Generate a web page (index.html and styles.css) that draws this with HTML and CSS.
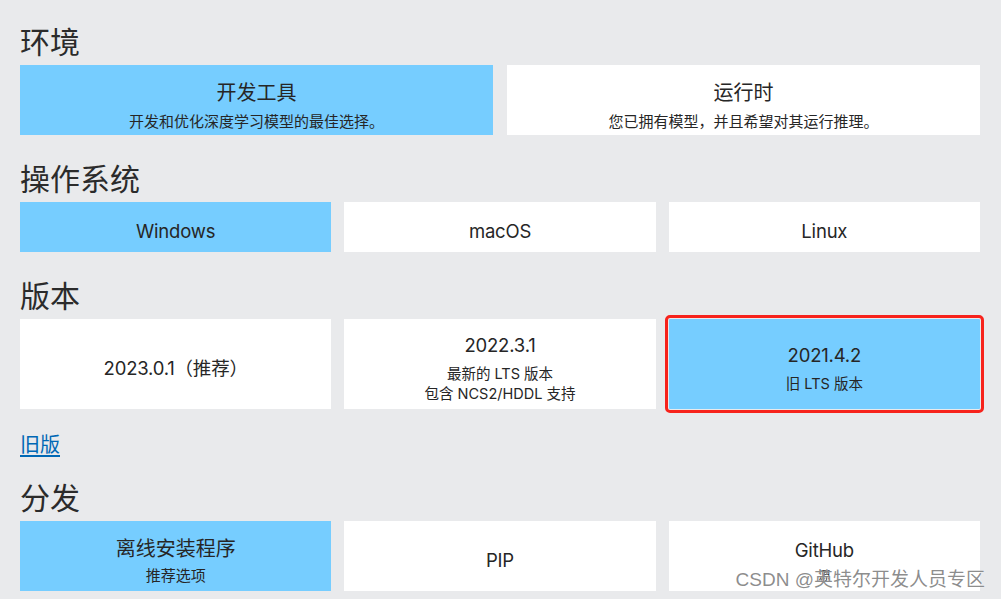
FILE: index.html
```html
<!DOCTYPE html>
<html lang="zh-CN">
<head>
<meta charset="utf-8">
<title>选择</title>
<link rel="stylesheet" href="styles.css">
</head>
<body>
<main class="page">
  <section class="group">
    <h2 class="group-title">环境</h2>
    <div class="row row-2 tall">
      <div class="opt active"><span class="opt-title">开发工具</span><span class="opt-sub">开发和优化深度学习模型的最佳选择。</span></div>
      <div class="opt"><span class="opt-title">运行时</span><span class="opt-sub">您已拥有模型，并且希望对其运行推理。</span></div>
    </div>
  </section>
  <section class="group">
    <h2 class="group-title">操作系统</h2>
    <div class="row row-3 short">
      <div class="opt active"><span class="opt-title latin">Windows</span></div>
      <div class="opt"><span class="opt-title latin">macOS</span></div>
      <div class="opt"><span class="opt-title latin">Linux</span></div>
    </div>
  </section>
  <section class="group versions">
    <h2 class="group-title">版本</h2>
    <div class="row row-3 huge">
      <div class="opt"><span class="opt-title latin">2023.0.1（推荐）</span></div>
      <div class="opt"><span class="opt-title latin">2022.3.1</span><span class="opt-sub small">最新的 LTS 版本<br>包含 NCS2/HDDL 支持</span></div>
      <div class="opt active marked"><span class="opt-title latin">2021.4.2</span><span class="opt-sub small">旧 LTS 版本</span></div>
    </div>
    <a class="old-link" href="#">旧版</a>
  </section>
  <section class="group last">
    <h2 class="group-title">分发</h2>
    <div class="row row-3 tall">
      <div class="opt active"><span class="opt-title">离线安装程序</span><span class="opt-sub small wide">推荐选项</span></div>
      <div class="opt"><span class="opt-title latin">PIP</span></div>
      <div class="opt"><span class="opt-title latin">GitHub</span><span class="opt-sub tiny">源</span></div>
    </div>
  </section>
  <div class="watermark">CSDN @英特尔开发人员专区</div>
</main>
</body>
</html>
```
FILE: styles.css
```css
html, body {
  margin: 0;
  padding: 0;
  background: #e9eaec;
}
body {
  font-family: "Inter", "Noto Sans CJK SC", sans-serif;
  color: #262626;
  width: 1001px;
  height: 599px;
  overflow: hidden;
}
.page {
  position: relative;
  padding: 20px 21px 0 20px;
  height: 579px;
}
.group {
  display: flex;
  flex-direction: column;
  margin-bottom: 22px;
}
.group.versions { margin-bottom: 17px; }
.group-title {
  margin: 0 0 5px 0;
  font-family: "Noto Sans CJK SC", sans-serif;
  font-weight: 400;
  font-size: 30px;
  line-height: 40px;
  color: #2b2b2b;
}
.row {
  display: grid;
  gap: 13px;
}
.row-2 { grid-template-columns: 1fr 1fr; gap: 14px; }
.row-3 { grid-template-columns: 1fr 1fr 1fr; }
.tall .opt { height: 70px; }
.short .opt { height: 50px; }
.huge .opt { height: 90px; }
.opt {
  box-sizing: border-box;
  padding-top: 7px;
  background: #ffffff;
  display: flex;
  flex-direction: column;
  align-items: center;
  justify-content: center;
  text-align: center;
}
.row-2 .opt { padding-top: 10px; }
.opt.active {
  background: #76cdff;
}
.opt.marked {
  outline: 3px solid #f7231c;
  outline-offset: 1px;
  border-radius: 1px;
}
.opt-title {
  font-family: "Noto Sans CJK SC", sans-serif;
  font-size: 20px;
  line-height: 28px;
  color: #262626;
}
.opt-title.latin {
  font-family: "Inter", "Noto Sans CJK SC", sans-serif;
  font-size: 18.5px;
  letter-spacing: -0.2px;
}
.opt-sub {
  margin-top: 4px;
  font-family: "Noto Sans CJK SC", sans-serif;
  font-size: 15px;
  line-height: 22px;
  color: #262626;
}
.opt-sub.small {
  font-family: "Inter", "Noto Sans CJK SC", sans-serif;
  font-size: 14.5px;
  line-height: 20px;
  margin-top: 5px;
}
.opt-sub.small.wide {
  margin-top: 4px;
  font-size: 15px;
}
.opt-sub.tiny {
  font-size: 12px;
  line-height: 18px;
  margin-top: 2px;
}
.old-link {
  align-self: flex-start;
  margin-top: 20px;
  font-family: "Noto Sans CJK SC", sans-serif;
  font-size: 20px;
  line-height: 30px;
  color: #0068b5;
  text-decoration: underline;
  text-underline-offset: 3px;
}
.watermark {
  position: absolute;
  right: 16px;
  bottom: 8px;
  font-family: "Liberation Sans", "Noto Sans CJK SC", sans-serif;
  font-size: 19px;
  line-height: 22px;
  color: rgba(120, 120, 120, 0.85);
  text-shadow: 0 0 1px #ffffff;
  white-space: nowrap;
}
```
